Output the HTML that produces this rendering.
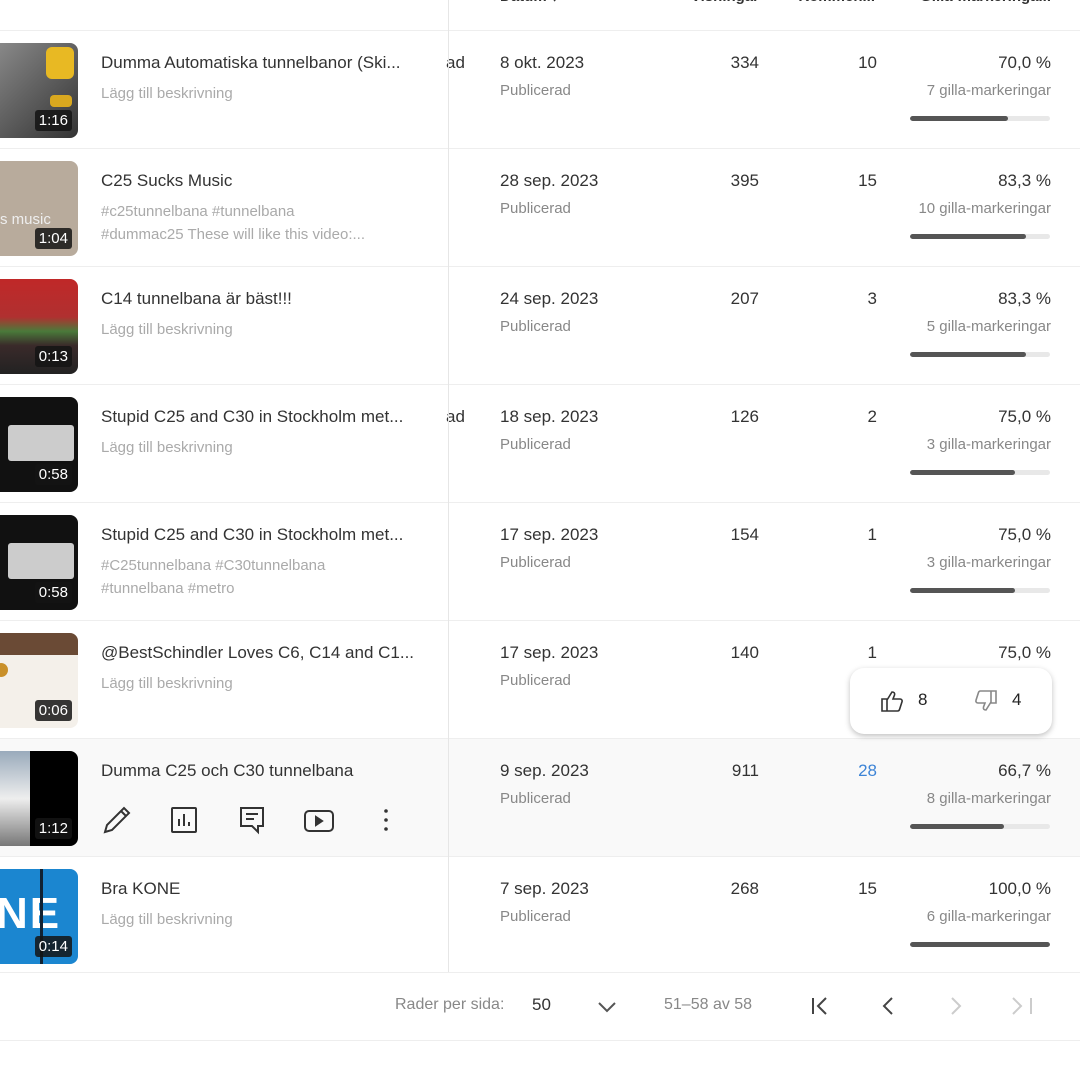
<!DOCTYPE html><html><head><meta charset="utf-8"><style>
*{margin:0;padding:0;box-sizing:border-box}
body{width:1080px;height:1080px;background:#fff;font-family:"Liberation Sans",Arial,sans-serif;position:relative;overflow:hidden;color:#333}
.r{position:absolute;left:0;width:1080px;height:118px;border-top:1px solid #eee}
.th{position:absolute;left:0;top:12px;width:78px;height:95px;border-radius:0 8px 8px 0;overflow:hidden}
.d{position:absolute;right:6px;bottom:7px;background:rgba(20,20,20,.85);color:#fff;font-size:15px;padding:2px 4px;border-radius:3px}
.t{position:absolute;left:101px;top:22px;font-size:17px;color:#333;white-space:nowrap}
.s{position:absolute;left:101px;top:51px;font-size:15px;color:#aaa;line-height:23px;white-space:nowrap}
.dt{position:absolute;left:500px;top:22px;font-size:17px;color:#333}
.pb{position:absolute;left:500px;top:51px;font-size:15px;color:#888}
.v{position:absolute;right:321px;top:22px;font-size:17px;color:#333}
.c{position:absolute;right:203px;top:22px;font-size:17px;color:#333}
.p{position:absolute;right:29px;top:22px;font-size:17px;color:#333}
.g{position:absolute;right:29px;top:51px;font-size:15px;color:#888}
.bar{position:absolute;left:910px;top:85px;width:140px;height:5px;background:#e8e8e8;border-radius:3px;overflow:hidden}
.bar i{display:block;height:5px;background:#555;border-radius:3px}
.ad{position:absolute;left:446px;top:22px;font-size:17px;color:#333}
.vl{position:absolute;left:448px;top:0;width:1px;height:972px;background:#e6e6e6}
</style></head><body>
<div style="position:absolute;top:-12px;left:500px;font-size:15px;font-weight:bold;color:#333">Datum ↓</div>
<div style="position:absolute;top:-12px;right:321px;font-size:15px;font-weight:bold;color:#333">Visningar</div>
<div style="position:absolute;top:-12px;right:205px;font-size:15px;font-weight:bold;color:#333">Kommen...</div>
<div style="position:absolute;top:-12px;right:29px;font-size:15px;font-weight:bold;color:#333">Gilla-markeringa...</div>

<div class="r" style="top:30px"><div class="th" style="background:linear-gradient(135deg,#888,#555 60%,#333)"><div style="position:absolute;right:4px;top:4px;width:28px;height:32px;background:#e8b923;border-radius:6px"></div><div style="position:absolute;right:6px;top:52px;width:22px;height:12px;background:#d9a81f;border-radius:4px"></div><span class="d">1:16</span></div>
<div class="t">Dumma Automatiska tunnelbanor (Ski...</div><div class="s">Lägg till beskrivning</div><div class="ad">ad</div>
<div class="dt">8 okt. 2023</div><div class="pb">Publicerad</div><div class="v">334</div><div class="c">10</div><div class="p">70,0 %</div><div class="g">7 gilla-markeringar</div><div class="bar"><i style="width:70%"></i></div></div>

<div class="r" style="top:148px"><div class="th" style="background:#b8ab9c"><div style="position:absolute;left:0;top:50px;color:#eee;font-size:15px">s music</div><span class="d">1:04</span></div>
<div class="t">C25 Sucks Music</div><div class="s">#c25tunnelbana #tunnelbana<br>#dummac25 These will like this video:...</div>
<div class="dt">28 sep. 2023</div><div class="pb">Publicerad</div><div class="v">395</div><div class="c">15</div><div class="p">83,3 %</div><div class="g">10 gilla-markeringar</div><div class="bar"><i style="width:83%"></i></div></div>

<div class="r" style="top:266px"><div class="th" style="background:linear-gradient(180deg,#c02828 0,#b03030 40%,#4a7a3a 55%,#3a2a2a 70%,#222)"><span class="d">0:13</span></div>
<div class="t">C14 tunnelbana är bäst!!!</div><div class="s">Lägg till beskrivning</div>
<div class="dt">24 sep. 2023</div><div class="pb">Publicerad</div><div class="v">207</div><div class="c">3</div><div class="p">83,3 %</div><div class="g">5 gilla-markeringar</div><div class="bar"><i style="width:83%"></i></div></div>

<div class="r" style="top:384px"><div class="th" style="background:#111"><div style="position:absolute;left:8px;top:28px;width:66px;height:36px;background:#ccc;border-radius:3px"></div><span class="d">0:58</span></div>
<div class="t">Stupid C25 and C30 in Stockholm met...</div><div class="s">Lägg till beskrivning</div><div class="ad">ad</div>
<div class="dt">18 sep. 2023</div><div class="pb">Publicerad</div><div class="v">126</div><div class="c">2</div><div class="p">75,0 %</div><div class="g">3 gilla-markeringar</div><div class="bar"><i style="width:75%"></i></div></div>

<div class="r" style="top:502px"><div class="th" style="background:#111"><div style="position:absolute;left:8px;top:28px;width:66px;height:36px;background:#ccc;border-radius:3px"></div><span class="d">0:58</span></div>
<div class="t">Stupid C25 and C30 in Stockholm met...</div><div class="s">#C25tunnelbana #C30tunnelbana<br>#tunnelbana #metro</div>
<div class="dt">17 sep. 2023</div><div class="pb">Publicerad</div><div class="v">154</div><div class="c">1</div><div class="p">75,0 %</div><div class="g">3 gilla-markeringar</div><div class="bar"><i style="width:75%"></i></div></div>

<div class="r" style="top:620px"><div class="th" style="background:#f4f0ea"><div style="position:absolute;left:0;top:0;width:78px;height:22px;background:#6a4a35"></div><div style="position:absolute;left:-6px;top:30px;width:14px;height:14px;border-radius:50%;background:#c9902a"></div><span class="d">0:06</span></div>
<div class="t">@BestSchindler Loves C6, C14 and C1...</div><div class="s">Lägg till beskrivning</div>
<div class="dt">17 sep. 2023</div><div class="pb">Publicerad</div><div class="v">140</div><div class="c">1</div><div class="p">75,0 %</div></div>

<div class="r" style="top:738px;background:#f9f9f9"><div class="th" style="background:#000"><div style="position:absolute;left:0;top:0;width:30px;height:95px;background:linear-gradient(180deg,#9ab,#eee 50%,#777)"></div><span class="d">1:12</span></div>
<div class="t">Dumma C25 och C30 tunnelbana</div>
<svg style="position:absolute;left:102px;top:66px" width="300" height="30" viewBox="0 0 300 30" fill="none" stroke="#333" stroke-width="2">
<path d="M3 27 L5 20 L22 3 L27 8 L10 25 Z M19 6 L24 11"/>
<rect x="70" y="3" width="24" height="24" rx="1"/><path d="M77 21V14M82 21V9M87 21V17" />
<path d="M139 3h22v18h-5v6l-6-6h-11z M144 9h12M144 14h8"/>
<rect x="203" y="6" width="28" height="20" rx="4"/><path d="M214 12v8l6-4z" fill="#333"/>
<circle cx="284" cy="6" r="1.8" fill="#333" stroke="none"/><circle cx="284" cy="15" r="1.8" fill="#333" stroke="none"/><circle cx="284" cy="24" r="1.8" fill="#333" stroke="none"/>
</svg>
<div class="dt">9 sep. 2023</div><div class="pb">Publicerad</div><div class="v">911</div><div class="c" style="color:#3d84d6">28</div><div class="p">66,7 %</div><div class="g">8 gilla-markeringar</div><div class="bar"><i style="width:67%"></i></div></div>

<div class="r" style="top:856px"><div class="th" style="background:#1b86d0"><div style="position:absolute;left:-4px;top:20px;color:#fff;font-size:44px;font-weight:bold;letter-spacing:2px">NE</div><div style="position:absolute;left:40px;top:0;width:3px;height:95px;background:#123"></div><span class="d">0:14</span></div>
<div class="t">Bra KONE</div><div class="s">Lägg till beskrivning</div>
<div class="dt">7 sep. 2023</div><div class="pb">Publicerad</div><div class="v">268</div><div class="c">15</div><div class="p">100,0 %</div><div class="g">6 gilla-markeringar</div><div class="bar"><i style="width:100%"></i></div></div>

<div class="vl"></div>
<div style="position:absolute;top:972px;left:0;width:1080px;height:1px;background:#eee"></div>
<div style="position:absolute;top:1040px;left:0;width:1080px;height:1px;background:#eee"></div>

<div style="position:absolute;left:850px;top:668px;width:202px;height:66px;background:#fff;border-radius:14px;box-shadow:0 2px 6px rgba(0,0,0,.25)">
<svg style="position:absolute;left:30px;top:22px" width="24" height="22" viewBox="0 0 24 22" fill="none" stroke="#333" stroke-width="1.6"><path d="M2 9h5v12H2z M7 10l5-8c2 0 3 1 2.5 3L13 9h7c1.5 0 2.5 1.3 2 2.8l-2.4 7.5c-.3 1-1 1.7-2 1.7H7"/></svg>
<div style="position:absolute;left:68px;top:22px;font-size:17px;color:#222">8</div>
<svg style="position:absolute;left:124px;top:22px" width="24" height="22" viewBox="0 0 24 22" fill="none" stroke="#888" stroke-width="1.6"><path d="M22 13h-5V1h5z M17 12l-5 8c-2 0-3-1-2.5-3L11 13H4c-1.5 0-2.5-1.3-2-2.8L4.4 2.7C4.7 1.7 5.4 1 6.4 1H17"/></svg>
<div style="position:absolute;left:162px;top:22px;font-size:17px;color:#222">4</div>
</div>

<div style="position:absolute;left:395px;top:996px;font-size:16px;color:#888">Rader per sida:</div>
<div style="position:absolute;left:532px;top:995px;font-size:17px;color:#333">50</div>
<svg style="position:absolute;left:597px;top:1000px" width="20" height="14" fill="none" stroke="#555" stroke-width="2"><path d="M2 3l8 8 8-8"/></svg>
<div style="position:absolute;left:664px;top:996px;font-size:16px;color:#888">51–58 av 58</div>
<svg style="position:absolute;left:805px;top:994px" width="250" height="24" fill="none" stroke-width="2"><path d="M8 4v16M21 4l-8 8 8 8" stroke="#444"/><path d="M87 4l-8 8 8 8" stroke="#444"/><path d="M147 4l8 8-8 8" stroke="#ccc"/><path d="M208 4l8 8-8 8M226 4v16" stroke="#ccc"/></svg>
</body></html>
